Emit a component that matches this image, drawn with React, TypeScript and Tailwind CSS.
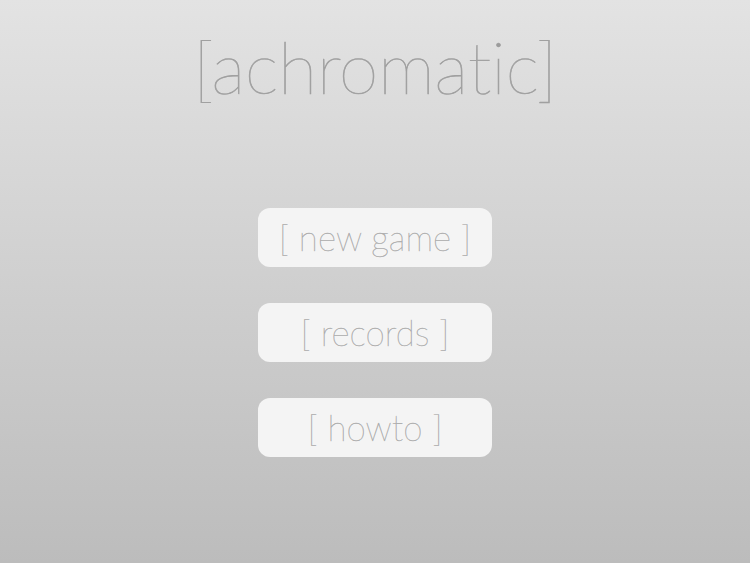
const items = ['[ new game ]', '[ records ]', '[ howto ]'];

export default function App() {
  return (
    <div
      className="flex h-[563px] w-[750px] flex-col items-center bg-gradient-to-b from-[#e3e3e3] to-[#bcbcbc] text-[#9c9c9c] antialiased"
      style={{ fontFamily: '"Lato Hairline", Lato, sans-serif' }}
    >
      <h1 className="mt-[24px] text-[72px] font-thin leading-[84px] tracking-[-0.4px] [-webkit-text-stroke:0.6px_#a0a0a0]">
        [achromatic]
      </h1>
      <div className="mt-[100px] flex flex-col gap-[36px]">
        {items.map((label) => (
          <button
            key={label}
            className="flex h-[59px] w-[234px] items-center justify-center rounded-[12px] bg-[#f4f4f4] text-[35px] font-thin text-[#a8a8a8] [-webkit-text-stroke:0.35px_#acacac]"
          >
            {label}
          </button>
        ))}
      </div>
    </div>
  );
}
